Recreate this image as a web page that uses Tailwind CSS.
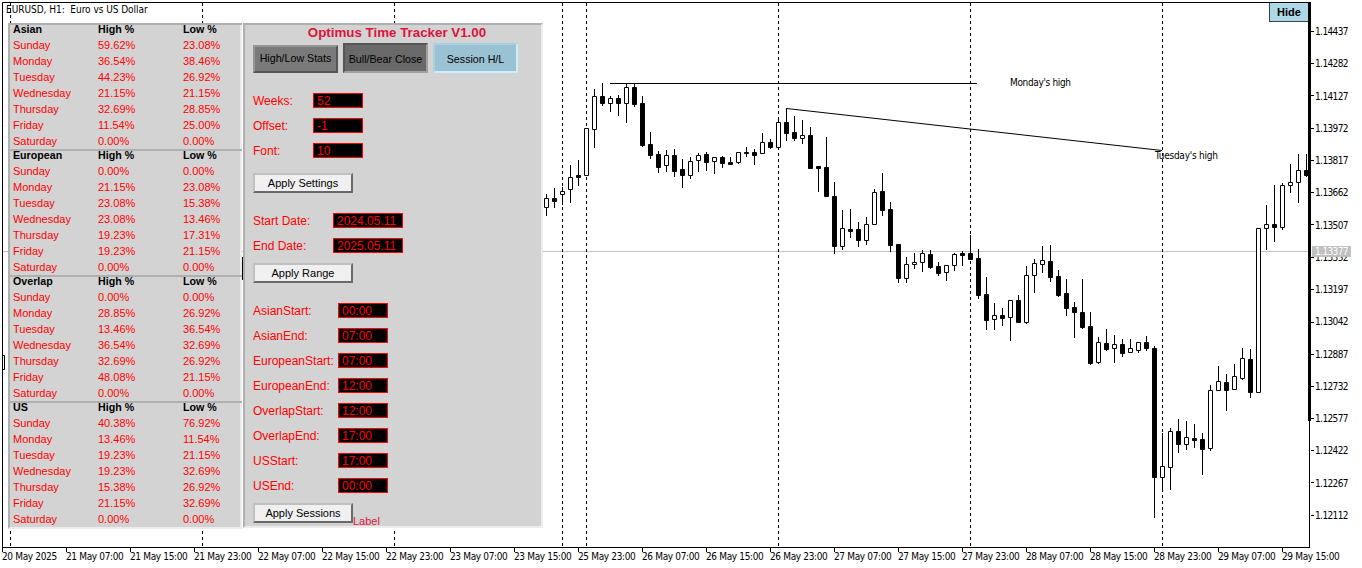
<!DOCTYPE html>
<html>
<head>
<meta charset="utf-8">
<script src="https://cdn.jsdelivr.net/npm/@tailwindcss/browser@4"></script>
</head>
<body class="bg-white">
<div class="relative w-[1362px] h-[568px] overflow-hidden bg-white font-['Liberation_Sans',Arial,sans-serif]">

  <!-- chart canvas -->
  <svg class="absolute left-0 top-0" width="1362" height="568" viewBox="0 0 1362 568" fill="none">
    <path d="M2 251.5H1309" stroke="#c0c0c0"/>
    <path d="M10.5 3V547M202.5 3V547M394.5 3V547M562.5 3V547M586.5 3V547M778.5 3V547M970.5 3V547M1162.5 3V547" stroke="#000" stroke-dasharray="3 3"/>
    <path d="M610 83.5H977" stroke="#000"/>
    <path d="M786.5 108.5L1162 150.5" stroke="#000"/>
    <!-- wicks -->
    <path stroke="#000" d="M242.5 257V280M546.5 194V216M554.5 188V208M562.5 187V205M570.5 165V203M578.5 160V186M586.5 128V175M594.5 89V148M602.5 83V106M610.5 96V112M618.5 95V116M626.5 84V123M634.5 84V107M642.5 96V147M650.5 132V159M658.5 151V173M666.5 150V172M674.5 149V177M682.5 159V188M690.5 157V179M698.5 153V172M706.5 152V171M714.5 157V174M722.5 156V168M730.5 157V165M738.5 152V164M746.5 147V157M754.5 149V165M762.5 133V153M770.5 139V149M778.5 117V147M786.5 108V141M794.5 116V141M802.5 120V144M810.5 127V169M818.5 166V192M826.5 137V197M834.5 182V254M842.5 210V250M850.5 209V238M858.5 222V247M866.5 217V245M874.5 189V225M882.5 173V216M890.5 202V252M898.5 244V283M906.5 257V283M914.5 253V269M922.5 250V272M930.5 250V269M938.5 262V276M946.5 265V281M954.5 253V271M962.5 251V266M970.5 235V259M978.5 249V299M986.5 277V330M994.5 303V330M1002.5 308V326M1010.5 300V341M1018.5 295V322M1026.5 266V324M1034.5 259V293M1042.5 246V273M1050.5 245V282M1058.5 270V297M1066.5 279V316M1074.5 302V338M1082.5 279V329M1090.5 312V365M1098.5 337V364M1106.5 329V351M1114.5 335V363M1122.5 339V357M1130.5 339V353M1138.5 342V353M1146.5 336V351M1154.5 346V518M1162.5 433V491M1170.5 428V490M1178.5 419V453M1186.5 421V450M1194.5 424V448M1202.5 433V475M1210.5 385V451M1218.5 366V390M1226.5 374V411M1234.5 364V390M1242.5 348V380M1250.5 349V398M1258.5 228V392M1266.5 205V250M1274.5 185V242M1282.5 183V230M1290.5 164V193M1298.5 154V203M1306.5 154V177"/>
    <!-- white bodies -->
    <path stroke="#000" fill="#fff" d="M544.5 198.5h4v9h-4zM560.5 191.5h4v3h-4zM568.5 177.5h4v12h-4zM584.5 128.5h4v47h-4zM592.5 96.5h4v33h-4zM608.5 98.5h4v5h-4zM624.5 87.5h4v16h-4zM664.5 155.5h4v10h-4zM688.5 161.5h4v14h-4zM696.5 155.5h4v5h-4zM712.5 157.5h4v4h-4zM736.5 152.5h4v10h-4zM760.5 142.5h4v11h-4zM776.5 122.5h4v25h-4zM800.5 135.5h4v3h-4zM840.5 228.5h4v18h-4zM864.5 224.5h4v16h-4zM872.5 192.5h4v32h-4zM904.5 264.5h4v14h-4zM912.5 262.5h4v2h-4zM920.5 253.5h4v9h-4zM944.5 265.5h4v7h-4zM952.5 254.5h4v11h-4zM992.5 315.5h4v4h-4zM1008.5 300.5h4v17h-4zM1024.5 275.5h4v47h-4zM1032.5 263.5h4v12h-4zM1040.5 260.5h4v4h-4zM1096.5 342.5h4v20h-4zM1112.5 344.5h4v4h-4zM1128.5 348.5h4v4h-4zM1136.5 342.5h4v8h-4zM1160.5 466.5h4v11h-4zM1168.5 431.5h4v36h-4zM1184.5 437.5h4v7h-4zM1208.5 390.5h4v58h-4zM1216.5 381.5h4v9h-4zM1232.5 376.5h4v13h-4zM1240.5 358.5h4v20h-4zM1256.5 228.5h4v164h-4zM1264.5 224.5h4v4h-4zM1280.5 185.5h4v42h-4zM1288.5 182.5h4v3h-4zM1296.5 170.5h4v12h-4zM2.5 355.5h2v14h-2z"/>
    <!-- black bodies -->
    <path stroke="#000" fill="#000" d="M552.5 198.5h4v3h-4zM576.5 175.5h4v2h-4zM600.5 96.5h4v7h-4zM616.5 98.5h4v5h-4zM632.5 87.5h4v17h-4zM640.5 103.5h4v42h-4zM648.5 144.5h4v11h-4zM656.5 154.5h4v13h-4zM672.5 155.5h4v16h-4zM680.5 169.5h4v6h-4zM704.5 154.5h4v8h-4zM720.5 157.5h4v6h-4zM728.5 162.5h4v2h-4zM744.5 152.5h4v1h-4zM752.5 152.5h4v3h-4zM768.5 142.5h4v5h-4zM784.5 122.5h4v11h-4zM792.5 132.5h4v6h-4zM808.5 135.5h4v33h-4zM816.5 166.5h4v2h-4zM824.5 167.5h4v29h-4zM832.5 196.5h4v50h-4zM848.5 229.5h4v2h-4zM856.5 229.5h4v11h-4zM880.5 191.5h4v19h-4zM888.5 209.5h4v36h-4zM896.5 244.5h4v34h-4zM928.5 254.5h4v13h-4zM936.5 266.5h4v7h-4zM960.5 253.5h4v2h-4zM968.5 253.5h4v6h-4zM976.5 258.5h4v37h-4zM984.5 294.5h4v26h-4zM1000.5 315.5h4v3h-4zM1016.5 300.5h4v22h-4zM1048.5 261.5h4v16h-4zM1056.5 276.5h4v19h-4zM1064.5 293.5h4v15h-4zM1072.5 307.5h4v5h-4zM1080.5 312.5h4v15h-4zM1088.5 326.5h4v37h-4zM1104.5 343.5h4v6h-4zM1120.5 344.5h4v9h-4zM1144.5 342.5h4v6h-4zM1152.5 348.5h4v129h-4zM1176.5 431.5h4v13h-4zM1192.5 438.5h4v2h-4zM1200.5 439.5h4v10h-4zM1224.5 382.5h4v8h-4zM1248.5 359.5h4v33h-4zM1272.5 224.5h4v3h-4zM1304.5 170.5h4v5h-4z"/>
    <!-- frame and scales -->
    <path d="M2.5 547V2.5H1309M2 547.5H1310" stroke="#000"/>
    <path d="M1309.5 421V547" stroke="#000"/>
    <path d="M1309.5 2V421" stroke="#000" stroke-width="3"/>
    <path stroke="#000" d="M2.5 548v4M66.5 548v4M130.5 548v4M194.5 548v4M258.5 548v4M322.5 548v4M386.5 548v4M450.5 548v4M514.5 548v4M578.5 548v4M642.5 548v4M706.5 548v4M770.5 548v4M834.5 548v4M898.5 548v4M962.5 548v4M1026.5 548v4M1090.5 548v4M1154.5 548v4M1218.5 548v4M1282.5 548v4"/>
    <path stroke="#000" d="M1311 31.5h3M1311 63.5h3M1311 95.5h3M1311 128.5h3M1311 160.5h3M1311 192.5h3M1311 224.5h3M1311 257.5h3M1311 289.5h3M1311 322.5h3M1311 354.5h3M1311 386.5h3M1311 418.5h3M1311 450.5h3M1311 482.5h3M1311 515.5h3"/>
  </svg>

  <!-- chart caption and object labels -->
  <div class="absolute left-[6px] top-[4px] h-3 leading-3 whitespace-pre text-[10px] tracking-[-0.03px] text-black font-['DejaVu_Sans_Condensed','DejaVu_Sans',sans-serif]">EURUSD, H1:  Euro vs US Dollar</div>
  <div class="absolute left-[1010px] top-[77px] h-3 leading-3 text-[10px] tracking-[-0.35px] text-black font-['DejaVu_Sans_Condensed','DejaVu_Sans',sans-serif]">Monday's high</div>
  <div class="absolute left-[1155px] top-[150px] h-3 leading-3 text-[10px] tracking-[-0.25px] text-black font-['DejaVu_Sans_Condensed','DejaVu_Sans',sans-serif]">Tuesday's high</div>

  <!-- price scale -->
  <div class="absolute left-[1315px] top-[16px] flex flex-col text-[10px] text-black font-['DejaVu_Sans_Condensed','DejaVu_Sans',sans-serif] tracking-[-0.6px]">
    <div class="h-[32.27px] leading-[32.27px]">1.14437</div>
    <div class="h-[32.27px] leading-[32.27px]">1.14282</div>
    <div class="h-[32.27px] leading-[32.27px]">1.14127</div>
    <div class="h-[32.27px] leading-[32.27px]">1.13972</div>
    <div class="h-[32.27px] leading-[32.27px]">1.13817</div>
    <div class="h-[32.27px] leading-[32.27px]">1.13662</div>
    <div class="h-[32.27px] leading-[32.27px]">1.13507</div>
    <div class="h-[32.27px] leading-[32.27px]">1.13352</div>
    <div class="h-[32.27px] leading-[32.27px]">1.13197</div>
    <div class="h-[32.27px] leading-[32.27px]">1.13042</div>
    <div class="h-[32.27px] leading-[32.27px]">1.12887</div>
    <div class="h-[32.27px] leading-[32.27px]">1.12732</div>
    <div class="h-[32.27px] leading-[32.27px]">1.12577</div>
    <div class="h-[32.27px] leading-[32.27px]">1.12422</div>
    <div class="h-[32.27px] leading-[32.27px]">1.12267</div>
    <div class="h-[32.27px] leading-[32.27px]">1.12112</div>
  </div>
  <div class="absolute left-[1312px] top-[246px] w-[39px] h-[11px] pl-[3px] bg-[#c0c0c0] text-white text-[10px] leading-[11px] tracking-[-0.6px] font-['DejaVu_Sans_Condensed','DejaVu_Sans',sans-serif]">1.13377</div>

  <!-- time scale -->
  <div class="absolute left-[2px] top-[551px] flex text-[10px] leading-[12px] tracking-[-0.35px] text-black whitespace-nowrap font-['DejaVu_Sans_Condensed','DejaVu_Sans',sans-serif]">
    <div class="w-[64px]">20 May 2025</div>
    <div class="w-[64px]">21 May 07:00</div>
    <div class="w-[64px]">21 May 15:00</div>
    <div class="w-[64px]">21 May 23:00</div>
    <div class="w-[64px]">22 May 07:00</div>
    <div class="w-[64px]">22 May 15:00</div>
    <div class="w-[64px]">22 May 23:00</div>
    <div class="w-[64px]">23 May 07:00</div>
    <div class="w-[64px]">23 May 15:00</div>
    <div class="w-[64px]">25 May 23:00</div>
    <div class="w-[64px]">26 May 07:00</div>
    <div class="w-[64px]">26 May 15:00</div>
    <div class="w-[64px]">26 May 23:00</div>
    <div class="w-[64px]">27 May 07:00</div>
    <div class="w-[64px]">27 May 15:00</div>
    <div class="w-[64px]">27 May 23:00</div>
    <div class="w-[64px]">28 May 07:00</div>
    <div class="w-[64px]">28 May 15:00</div>
    <div class="w-[64px]">28 May 23:00</div>
    <div class="w-[64px]">29 May 07:00</div>
    <div class="w-[64px]">29 May 15:00</div>
  </div>

  <!-- hide button -->
  <div class="absolute left-[1269px] top-[3px] w-[39px] h-[19px] pt-[1px] flex items-center justify-center bg-[#add8e6] border-l border-b border-[#404040] text-[11px] font-bold text-black">Hide</div>

  <!-- statistics panel -->
  <div class="absolute left-[8px] top-[23px] w-[234px] h-[506px] bg-[#d3d3d3] border-l-2 border-r-2 border-b-2 border-l-[#b0b0b0] border-r-[#ececec] border-b-[#ececec] text-[11px] text-[#ff0000]">

    <section class="h-[126px] -mr-[2px] border-t-2 border-[#b0b0b0] pl-[3px]">
      <div class="grid grid-cols-[85px_85px_1fr] h-[8px] leading-[8px] mb-[4px] font-bold text-black text-[10.67px]"><span>Asian</span><span>High %</span><span>Low %</span></div>
      <div class="grid grid-cols-[85px_85px_1fr] h-4 leading-4"><span>Sunday</span><span>59.62%</span><span>23.08%</span></div>
      <div class="grid grid-cols-[85px_85px_1fr] h-4 leading-4"><span>Monday</span><span>36.54%</span><span>38.46%</span></div>
      <div class="grid grid-cols-[85px_85px_1fr] h-4 leading-4"><span>Tuesday</span><span>44.23%</span><span>26.92%</span></div>
      <div class="grid grid-cols-[85px_85px_1fr] h-4 leading-4"><span>Wednesday</span><span>21.15%</span><span>21.15%</span></div>
      <div class="grid grid-cols-[85px_85px_1fr] h-4 leading-4"><span>Thursday</span><span>32.69%</span><span>28.85%</span></div>
      <div class="grid grid-cols-[85px_85px_1fr] h-4 leading-4"><span>Friday</span><span>11.54%</span><span>25.00%</span></div>
      <div class="grid grid-cols-[85px_85px_1fr] h-4 leading-4"><span>Saturday</span><span>0.00%</span><span>0.00%</span></div>
    </section>

    <section class="h-[126px] -mr-[2px] border-t-2 border-[#b0b0b0] pl-[3px]">
      <div class="grid grid-cols-[85px_85px_1fr] h-[8px] leading-[8px] mb-[4px] font-bold text-black text-[10.67px]"><span>European</span><span>High %</span><span>Low %</span></div>
      <div class="grid grid-cols-[85px_85px_1fr] h-4 leading-4"><span>Sunday</span><span>0.00%</span><span>0.00%</span></div>
      <div class="grid grid-cols-[85px_85px_1fr] h-4 leading-4"><span>Monday</span><span>21.15%</span><span>23.08%</span></div>
      <div class="grid grid-cols-[85px_85px_1fr] h-4 leading-4"><span>Tuesday</span><span>23.08%</span><span>15.38%</span></div>
      <div class="grid grid-cols-[85px_85px_1fr] h-4 leading-4"><span>Wednesday</span><span>23.08%</span><span>13.46%</span></div>
      <div class="grid grid-cols-[85px_85px_1fr] h-4 leading-4"><span>Thursday</span><span>19.23%</span><span>17.31%</span></div>
      <div class="grid grid-cols-[85px_85px_1fr] h-4 leading-4"><span>Friday</span><span>19.23%</span><span>21.15%</span></div>
      <div class="grid grid-cols-[85px_85px_1fr] h-4 leading-4"><span>Saturday</span><span>0.00%</span><span>0.00%</span></div>
    </section>

    <section class="h-[126px] -mr-[2px] border-t-2 border-[#b0b0b0] pl-[3px]">
      <div class="grid grid-cols-[85px_85px_1fr] h-[8px] leading-[8px] mb-[4px] font-bold text-black text-[10.67px]"><span>Overlap</span><span>High %</span><span>Low %</span></div>
      <div class="grid grid-cols-[85px_85px_1fr] h-4 leading-4"><span>Sunday</span><span>0.00%</span><span>0.00%</span></div>
      <div class="grid grid-cols-[85px_85px_1fr] h-4 leading-4"><span>Monday</span><span>28.85%</span><span>26.92%</span></div>
      <div class="grid grid-cols-[85px_85px_1fr] h-4 leading-4"><span>Tuesday</span><span>13.46%</span><span>36.54%</span></div>
      <div class="grid grid-cols-[85px_85px_1fr] h-4 leading-4"><span>Wednesday</span><span>36.54%</span><span>32.69%</span></div>
      <div class="grid grid-cols-[85px_85px_1fr] h-4 leading-4"><span>Thursday</span><span>32.69%</span><span>26.92%</span></div>
      <div class="grid grid-cols-[85px_85px_1fr] h-4 leading-4"><span>Friday</span><span>48.08%</span><span>21.15%</span></div>
      <div class="grid grid-cols-[85px_85px_1fr] h-4 leading-4"><span>Saturday</span><span>0.00%</span><span>0.00%</span></div>
    </section>

    <section class="h-[126px] -mr-[2px] border-t-2 border-[#b0b0b0] pl-[3px]">
      <div class="grid grid-cols-[85px_85px_1fr] h-[8px] leading-[8px] mb-[4px] font-bold text-black text-[10.67px]"><span>US</span><span>High %</span><span>Low %</span></div>
      <div class="grid grid-cols-[85px_85px_1fr] h-4 leading-4"><span>Sunday</span><span>40.38%</span><span>76.92%</span></div>
      <div class="grid grid-cols-[85px_85px_1fr] h-4 leading-4"><span>Monday</span><span>13.46%</span><span>11.54%</span></div>
      <div class="grid grid-cols-[85px_85px_1fr] h-4 leading-4"><span>Tuesday</span><span>19.23%</span><span>21.15%</span></div>
      <div class="grid grid-cols-[85px_85px_1fr] h-4 leading-4"><span>Wednesday</span><span>19.23%</span><span>32.69%</span></div>
      <div class="grid grid-cols-[85px_85px_1fr] h-4 leading-4"><span>Thursday</span><span>15.38%</span><span>26.92%</span></div>
      <div class="grid grid-cols-[85px_85px_1fr] h-4 leading-4"><span>Friday</span><span>21.15%</span><span>32.69%</span></div>
      <div class="grid grid-cols-[85px_85px_1fr] h-4 leading-4"><span>Saturday</span><span>0.00%</span><span>0.00%</span></div>
    </section>
  </div>

  <!-- settings panel -->
  <div class="absolute left-[243px] top-[23px] w-[300px] h-[505px] pl-[8px] bg-[#d3d3d3] border-t-2 border-l-2 border-r-2 border-b-2 border-t-[#b0b0b0] border-l-[#b0b0b0] border-r-[#ececec] border-b-[#ececec] text-[12px] text-[#ff0000] flex flex-col">
    <div class="h-4 leading-4 text-center text-[13.33px] font-bold text-[#dc143c]">Optimus Time Tracker V1.00</div>

    <div class="mt-[2px] flex items-end gap-[5px] text-[10.67px] text-black">
      <div class="w-[85px] h-[28px] pb-[2px] flex items-center justify-center bg-[#7a7a7a] border-2 border-t-[#969696] border-l-[#969696] border-r-[#555555] border-b-[#555555]">High/Low Stats</div>
      <div class="w-[85px] h-[30px] pt-[2px] flex items-center justify-center bg-[#696969] border-2 border-t-[#555555] border-l-[#555555] border-r-[#a0a0a0] border-b-[#a0a0a0]">Bull/Bear Close</div>
      <div class="w-[85px] h-[30px] pt-[2px] flex items-center justify-center bg-[#9ac2d2] border-2 border-t-[#a9d0df] border-l-[#a9d0df] border-r-[#c8f0ff] border-b-[#c8f0ff]">Session H/L</div>
    </div>

    <div class="mt-[20px] flex flex-col gap-[10px]">
      <div class="flex h-[15px] items-center"><span class="w-[60px]">Weeks:</span><span class="w-[50px] h-[15px] leading-[15px] pl-[3px] bg-black border border-[#ff0000]">52</span></div>
      <div class="flex h-[15px] items-center"><span class="w-[60px]">Offset:</span><span class="w-[50px] h-[15px] leading-[15px] pl-[3px] bg-black border border-[#ff0000]">-1</span></div>
      <div class="flex h-[15px] items-center"><span class="w-[60px]">Font:</span><span class="w-[50px] h-[15px] leading-[15px] pl-[3px] bg-black border border-[#ff0000]">10</span></div>
    </div>
    <div class="mt-[15px] w-[100px] h-[20px] flex items-center justify-center bg-[#f0f0f0] border-2 border-t-[#c0c0c0] border-l-[#c0c0c0] border-r-[#696969] border-b-[#696969] text-[11px] text-black">Apply Settings</div>

    <div class="mt-[20px] flex flex-col gap-[10px]">
      <div class="flex h-[15px] items-center"><span class="w-[80px]">Start Date:</span><span class="w-[70px] h-[15px] leading-[15px] pl-[3px] bg-black border border-[#ff0000]">2024.05.11</span></div>
      <div class="flex h-[15px] items-center"><span class="w-[80px]">End Date:</span><span class="w-[70px] h-[15px] leading-[15px] pl-[3px] bg-black border border-[#ff0000]">2025.05.11</span></div>
    </div>
    <div class="mt-[10px] w-[100px] h-[20px] flex items-center justify-center bg-[#f0f0f0] border-2 border-t-[#c0c0c0] border-l-[#c0c0c0] border-r-[#696969] border-b-[#696969] text-[11px] text-black">Apply Range</div>

    <div class="mt-[20px] flex flex-col gap-[10px]">
      <div class="flex h-[15px] items-center"><span class="w-[85px]">AsianStart:</span><span class="w-[50px] h-[15px] leading-[15px] pl-[3px] bg-black border border-[#ff0000]">00:00</span></div>
      <div class="flex h-[15px] items-center"><span class="w-[85px]">AsianEnd:</span><span class="w-[50px] h-[15px] leading-[15px] pl-[3px] bg-black border border-[#ff0000]">07:00</span></div>
      <div class="flex h-[15px] items-center"><span class="w-[85px]">EuropeanStart:</span><span class="w-[50px] h-[15px] leading-[15px] pl-[3px] bg-black border border-[#ff0000]">07:00</span></div>
      <div class="flex h-[15px] items-center"><span class="w-[85px]">EuropeanEnd:</span><span class="w-[50px] h-[15px] leading-[15px] pl-[3px] bg-black border border-[#ff0000]">12:00</span></div>
      <div class="flex h-[15px] items-center"><span class="w-[85px]">OverlapStart:</span><span class="w-[50px] h-[15px] leading-[15px] pl-[3px] bg-black border border-[#ff0000]">12:00</span></div>
      <div class="flex h-[15px] items-center"><span class="w-[85px]">OverlapEnd:</span><span class="w-[50px] h-[15px] leading-[15px] pl-[3px] bg-black border border-[#ff0000]">17:00</span></div>
      <div class="flex h-[15px] items-center"><span class="w-[85px]">USStart:</span><span class="w-[50px] h-[15px] leading-[15px] pl-[3px] bg-black border border-[#ff0000]">17:00</span></div>
      <div class="flex h-[15px] items-center"><span class="w-[85px]">USEnd:</span><span class="w-[50px] h-[15px] leading-[15px] pl-[3px] bg-black border border-[#ff0000]">00:00</span></div>
    </div>
    <div class="mt-[10px] flex items-end">
      <div class="w-[100px] h-[20px] flex items-center justify-center bg-[#f0f0f0] border-2 border-t-[#c0c0c0] border-l-[#c0c0c0] border-r-[#696969] border-b-[#696969] text-[11px] text-black">Apply Sessions</div>
      <span class="-mb-[5px] text-[11px] leading-[14px] text-[#dc143c]">Label</span>
    </div>
  </div>
</div>
</body>
</html>
